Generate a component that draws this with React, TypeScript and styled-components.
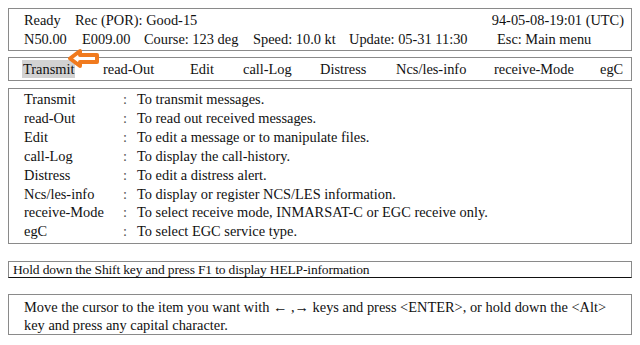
import * as React from "react";
import styled, { createGlobalStyle } from "styled-components";

const GlobalStyle = createGlobalStyle`
  html, body {
    margin: 0;
    padding: 0;
    background: #fff;
  }
`;

const Page = styled.div`
  width: 640px;
  height: 345px;
  box-sizing: border-box;
  padding: 8px 8px 0 8px;
  display: flex;
  flex-direction: column;
  font-family: "Liberation Serif", "Times New Roman", serif;
  font-size: 14.4px;
  color: #111;
`;

const Box = styled.div<{ $gap?: number }>`
  box-sizing: border-box;
  width: 624px;
  border: 1px solid #8a8a8a;
  margin-top: ${(p) => p.$gap ?? 0}px;
`;

const StatusBox = styled(Box)`
  height: 43px;
  padding: 2px 7px 0 15px;
  line-height: 19px;
`;

const StatusRow = styled.div`
  display: flex;
  white-space: nowrap;
`;

const Field = styled.span<{ $w?: number }>`
  display: inline-block;
  width: ${(p) => (p.$w ? `${p.$w}px` : "auto")};
`;

const Spacer = styled.span`
  flex: 1;
`;

const MenuBox = styled(Box)`
  height: 24px;
  display: flex;
  align-items: center;
  padding-left: 13px;
  position: relative;
`;

const MenuItem = styled.span<{ $w: number; $active?: boolean }>`
  display: inline-block;
  width: ${(p) => p.$w}px;
  white-space: nowrap;
  span {
    background: ${(p) => (p.$active ? "#d2d2d2" : "transparent")};
    padding: 1px 1px;
  }
`;

// orange pointer marking the selected menu item
const Arrow = styled.svg`
  position: absolute;
  left: 58px;
  top: -10px;
`;

const DescBox = styled(Box)`
  height: 156px;
  padding: 1px 0 0 15px;
  line-height: 18.9px;
`;

const DescRow = styled.div`
  display: grid;
  grid-template-columns: 99px 14px 1fr;
  white-space: nowrap;
`;

const Colon = styled.span`
  color: #555;
`;

const HelpBox = styled(Box)`
  height: 17px;
  border-bottom: 1px solid #111;
  padding-left: 4px;
  font-size: 13.5px;
  line-height: 15px;
  letter-spacing: -0.15px;
  white-space: nowrap;
`;

const HintBox = styled(Box)`
  height: 41px;
  padding: 3px 0 0 15px;
  line-height: 18px;
`;

const menu: [string, number][] = [
  ["Transmit", 80],
  ["read-Out", 87],
  ["Edit", 53],
  ["call-Log", 77],
  ["Distress", 76],
  ["Ncs/les-info", 98],
  ["receive-Mode", 106],
  ["egC", 30],
];

const descriptions: [string, string][] = [
  ["Transmit", "To transmit messages."],
  ["read-Out", "To read out received messages."],
  ["Edit", "To edit a message or to manipulate files."],
  ["call-Log", "To display the call-history."],
  ["Distress", "To edit a distress alert."],
  ["Ncs/les-info", "To display or register NCS/LES information."],
  ["receive-Mode", "To select receive mode, INMARSAT-C or EGC receive only."],
  ["egC", "To select EGC service type."],
];

const App: React.FC = () => {
  return (
    <>
      <GlobalStyle />
      <Page>
        <StatusBox>
          <StatusRow>
            <Field $w={51}>Ready</Field>
            <Field>Rec (POR): Good-15</Field>
            <Spacer />
            <Field>94-05-08-19:01 (UTC)</Field>
          </StatusRow>
          <StatusRow>
            <Field $w={58}>N50.00</Field>
            <Field $w={62}>E009.00</Field>
            <Field $w={109}>Course: 123 deg</Field>
            <Field $w={96}>Speed: 10.0 kt</Field>
            <Field $w={148}>Update: 05-31 11:30</Field>
            <Field>Esc: Main menu</Field>
          </StatusRow>
        </StatusBox>

        <MenuBox $gap={6}>
          {menu.map(([label, w], i) => (
            <MenuItem key={label} $w={w} $active={i === 0}>
              <span>{label}</span>
            </MenuItem>
          ))}
          <Arrow width="33" height="21" viewBox="0 0 33 21">
            <path
              d="M3 10.5 L13 3 L13 7 L30 7 L30 14 L13 14 L13 18 Z"
              fill="#fff"
              stroke="#f07a1e"
              strokeWidth="4"
              strokeLinejoin="round"
            />
          </Arrow>
        </MenuBox>

        <DescBox $gap={7}>
          {descriptions.map(([key, text]) => (
            <DescRow key={key}>
              <span>{key}</span>
              <Colon>:</Colon>
              <span>{text}</span>
            </DescRow>
          ))}
        </DescBox>

        <HelpBox $gap={17}>
          Hold down the Shift key and press F1 to display HELP-information
        </HelpBox>

        <HintBox $gap={16}>
          Move the cursor to the item you want with ← ,→ keys and press
          &lt;ENTER&gt;, or hold down the &lt;Alt&gt;
          <br />
          key and press any capital character.
        </HintBox>
      </Page>
    </>
  );
};

export default App;
